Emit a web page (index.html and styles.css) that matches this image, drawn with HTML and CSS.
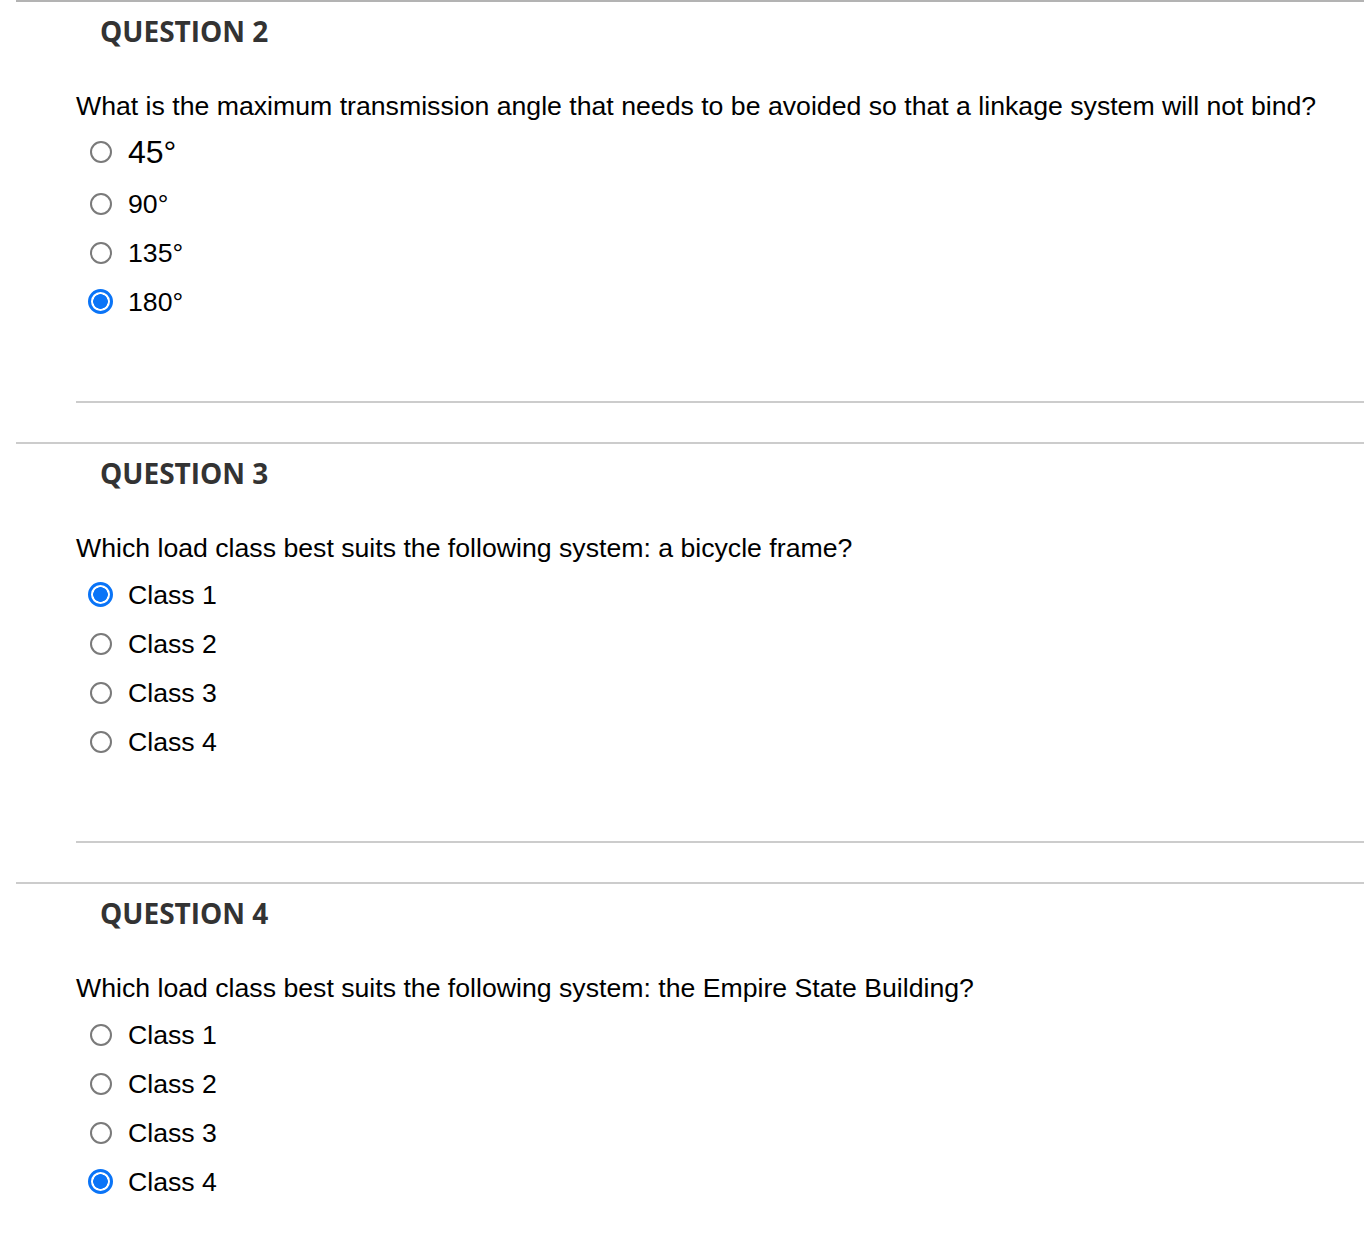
FILE: index.html
```html
<!DOCTYPE html>
<html lang="en">
<head>
<meta charset="utf-8">
<title>Questions</title>
<link rel="stylesheet" href="styles.css">
</head>
<body>
<div class="page">
  <section class="question first">
    <h2 class="q-head">QUESTION 2</h2>
    <div class="q-body">
      <p class="q-text">What is the maximum transmission angle that needs to be avoided so that a linkage system will not bind?</p>
      <ul class="options">
        <li class="option big"><span class="slot"><span class="radio"></span></span><span class="label">45°</span></li>
        <li class="option"><span class="slot"><span class="radio"></span></span><span class="label">90°</span></li>
        <li class="option"><span class="slot"><span class="radio"></span></span><span class="label">135°</span></li>
        <li class="option"><span class="slot"><span class="radio checked"></span></span><span class="label">180°</span></li>
      </ul>
    </div>
  </section>
  <section class="question">
    <h2 class="q-head">QUESTION 3</h2>
    <div class="q-body">
      <p class="q-text">Which load class best suits the following system: a bicycle frame?</p>
      <ul class="options">
        <li class="option"><span class="slot"><span class="radio checked"></span></span><span class="label">Class 1</span></li>
        <li class="option"><span class="slot"><span class="radio"></span></span><span class="label">Class 2</span></li>
        <li class="option"><span class="slot"><span class="radio"></span></span><span class="label">Class 3</span></li>
        <li class="option"><span class="slot"><span class="radio"></span></span><span class="label">Class 4</span></li>
      </ul>
    </div>
  </section>
  <section class="question">
    <h2 class="q-head">QUESTION 4</h2>
    <div class="q-body">
      <p class="q-text">Which load class best suits the following system: the Empire State Building?</p>
      <ul class="options">
        <li class="option"><span class="slot"><span class="radio"></span></span><span class="label">Class 1</span></li>
        <li class="option"><span class="slot"><span class="radio"></span></span><span class="label">Class 2</span></li>
        <li class="option"><span class="slot"><span class="radio"></span></span><span class="label">Class 3</span></li>
        <li class="option"><span class="slot"><span class="radio checked"></span></span><span class="label">Class 4</span></li>
      </ul>
    </div>
  </section>
</div>
</body>
</html>
```
FILE: styles.css
```css
html, body {
  margin: 0;
  padding: 0;
  background: #ffffff;
}
body {
  font-family: "Liberation Sans", Arial, sans-serif;
  color: #000;
}
.page {
  width: 1364px;
}
.question {
  margin-left: 16px;
  border-top: 2px solid #cccccc;
  padding-bottom: 39px;
}
.question.first {
  border-top-color: #b3b3b3;
}
.q-head {
  margin: 0;
  padding: 11px 0 0 84px;
  font-family: "Open Sans", sans-serif;
  font-weight: 700;
  font-size: 28px;
  line-height: 36px;
  color: #333333;
}
.q-body {
  margin-left: 60px;
  padding-top: 42px;
  padding-bottom: 75px;
  border-bottom: 2px solid #cccccc;
}
.q-text {
  margin: 0;
  font-size: 26.67px;
  line-height: 30px;
}
.options {
  list-style: none;
  margin: 7px 0 0 0;
  padding: 0;
}
.option {
  box-sizing: border-box;
  display: flex;
  align-items: center;
  height: 49px;
  font-size: 26.67px;
  line-height: 30px;
}
.option.big {
  height: 51px;
  padding-bottom: 4px;
  font-size: 32px;
  line-height: 36px;
}
.slot {
  width: 25px;
  height: 25px;
  margin-left: 12px;
  display: flex;
  align-items: center;
  justify-content: center;
  flex: none;
}
.radio {
  box-sizing: border-box;
  width: 22px;
  height: 22px;
  border: 2px solid #7a7a7a;
  border-radius: 50%;
  background: #fff;
}
.radio.checked {
  width: 25px;
  height: 25px;
  border: 3px solid #0a74f7;
  background: radial-gradient(circle, #0a74f7 0 7px, #ffffff 7.6px);
}
.label {
  margin-left: 15px;
}
```
